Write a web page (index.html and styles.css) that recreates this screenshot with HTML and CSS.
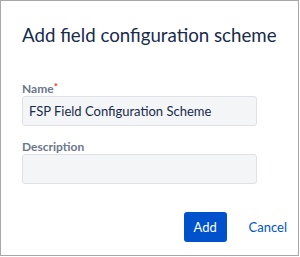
FILE: index.html
```html
<!DOCTYPE html>
<html lang="en">
<head>
    <meta charset="UTF-8">
    <meta name="viewport" content="width=device-width, initial-scale=1.0">
    <title>Add field configuration scheme</title>
    <link rel="stylesheet" href="styles.css">
</head>
<body>
    <div class="dialog">
        <h2 class="dialog-title">Add field configuration scheme</h2>

        <form class="scheme-form">
            <div class="field">
                <label class="field-label" for="scheme-name">Name<span class="required">*</span></label>
                <input type="text" class="field-input" id="scheme-name" value="FSP Field Configuration Scheme">
            </div>
            <div class="field">
                <label class="field-label" for="scheme-desc">Description</label>
                <input type="text" class="field-input" id="scheme-desc">
            </div>

            <div class="dialog-footer">
                <button type="submit" class="add-button">Add</button>
                <button type="button" class="cancel-button">Cancel</button>
            </div>
        </form>
    </div>
</body>
</html>
```

FILE: styles.css
```css
/* Base */
* {
    margin: 0;
    padding: 0;
    box-sizing: border-box;
}

body {
    font-family: 'Lato', 'Noto Sans', sans-serif;
    color: #172b4d;
    background-color: #fff;
}

/* Dialog box */
.dialog {
    width: 299px;
    height: 256px;
    border: 1px solid #a7a7a7;
    padding: 22px 21px 0;
}

.dialog-title {
    font-size: 18.7px;
    font-weight: 400;
    line-height: 24px;
    color: #172b4d;
    margin-bottom: 35px;
}

/* Form fields */
.field {
    margin-bottom: 14px;
}

.field-label {
    display: block;
    font-size: 12px;
    font-weight: 700;
    line-height: 14px;
    color: #6b778c;
}

.required {
    color: #de350b;
    font-size: 10px;
    vertical-align: top;
    position: relative;
    top: -3px;
}

.field-input {
    display: block;
    width: 235px;
    height: 30px;
    padding: 0 6px;
    font-family: inherit;
    font-size: 13px;
    color: #172b4d;
    background-color: #f4f5f7;
    border: 1px solid #dfe1e6;
    border-radius: 3px;
}

.field-input:focus {
    outline: none;
    border-color: #4c9aff;
}

/* Footer buttons */
.dialog-footer {
    display: flex;
    justify-content: flex-end;
    align-items: center;
    margin-top: 28px;
    margin-right: -10px;
}

.add-button {
    width: 43px;
    height: 30px;
    font-family: inherit;
    font-size: 13px;
    color: #fff;
    background-color: #0052cc;
    border: none;
    border-radius: 3px;
    cursor: pointer;
}

.cancel-button {
    margin-left: 22px;
    font-family: inherit;
    font-size: 13px;
    color: #0052cc;
    background: none;
    border: none;
    cursor: pointer;
}
```
